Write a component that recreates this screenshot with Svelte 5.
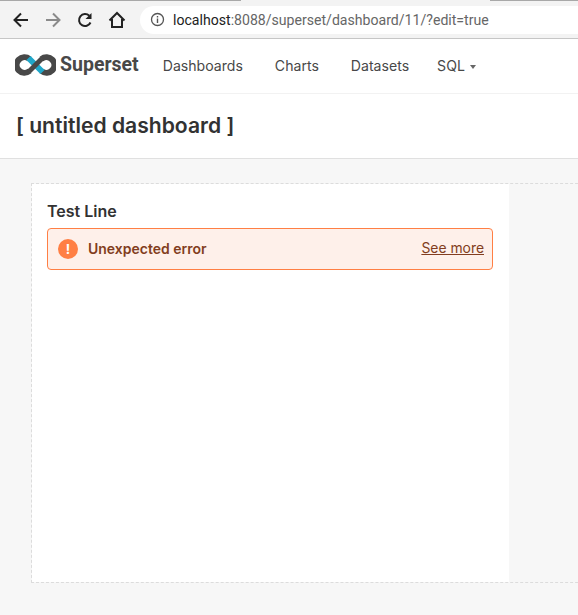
<script>
	let navItems = ['Dashboards', 'Charts', 'Datasets']
</script>

<div class="page">
	<div class="browser">
		<div class="tabline"><span class="left"></span><span class="right"></span></div>
		<div class="bar">
			<div class="tools">
				<svg width="18" height="18" viewBox="0 0 18 18"><path d="M16 9H3M9 2.500 2.500 9 9 15.500" fill="none" stroke="#222" stroke-width="2"/></svg>
				<svg width="18" height="18" viewBox="0 0 18 18"><path d="M2 9h13M9 2.500 15.500 9 9 15.500" fill="none" stroke="#8a8a8a" stroke-width="2"/></svg>
				<svg width="18" height="18" viewBox="0 0 18 18"><path d="M14.500 11.500A6 6 0 1 1 13.300 4.800" fill="none" stroke="#222" stroke-width="2"/><path d="M15.500 2v6h-6z" fill="#222"/></svg>
				<svg width="18" height="18" viewBox="0 0 18 18"><path d="M1.500 9.500 9 2l7.500 7.500M4 8v8h10V8" fill="none" stroke="#222" stroke-width="2"/></svg>
			</div>
			<div class="url">
				<svg width="15" height="15" viewBox="0 0 15 15"><circle cx="7.500" cy="7.500" r="6" fill="none" stroke="#555" stroke-width="1.300"/><path d="M7.500 6.500v4.500M7.500 4v1.500" stroke="#555" stroke-width="1.400"/></svg>
				<span class="addr"><b>localhost</b>:8088/superset/dashboard/11/?edit=true</span>
			</div>
		</div>
	</div>

	<nav>
		<div class="logo">
			<svg width="41" height="22" viewBox="0 0 41 22">
				<path d="M14.500 5A7.800 7.800 0 1 0 14.500 17M26.500 5A7.800 7.800 0 1 1 26.500 17" fill="none" stroke="#484848" stroke-width="6"/>
				<path d="M13.500 4 19.500 10M21.500 12 27.500 18" fill="none" stroke="#20a7c9" stroke-width="6"/>
				<path d="M14 17.500 27 4.500" fill="none" stroke="#484848" stroke-width="5"/>
			</svg>
			<span>Superset</span>
		</div>
		<ul>
			{#each navItems as item}
				<li>{item}</li>
			{/each}
			<li class="menu">SQL <i></i></li>
		</ul>
	</nav>

	<header>
		<h1>[ untitled dashboard ]</h1>
	</header>

	<main>
		<div class="grid">
			<section class="chart">
				<h2>Test Line</h2>
				<div class="alert">
					<span class="mark">!</span>
					<strong>Unexpected error</strong>
					<a href="#more">See more</a>
				</div>
			</section>
		</div>
	</main>
</div>

<style>
	:global(body) {
		margin: 0;
		overflow: hidden;
	}
	.page {
		width: 578px;
		height: 615px;
		overflow: hidden;
		display: flex;
		flex-direction: column;
		background: #f7f7f7;
		font-family: Inter, "Liberation Sans", sans-serif;
		color: #323232;
	}
	.browser {
		height: 38px;
		flex: none;
		display: flex;
		flex-direction: column;
		background: #f3f3f3;
		border-bottom: 1px solid #c6c6c6;
	}
	.tabline {
		height: 1px;
		flex: none;
		display: flex;
		justify-content: space-between;
	}
	.tabline span {
		background: #a8a8a8;
	}
	.left {
		width: 241px;
	}
	.right {
		width: 88px;
	}
	.bar {
		flex: 1;
		display: flex;
		align-items: center;
		gap: 14px;
		padding-left: 12px;
		min-width: 0;
	}
	.tools {
		display: flex;
		gap: 14px;
		align-items: center;
	}
	.url {
		flex: 1;
		height: 28px;
		margin-right: -20px;
		padding-left: 10px;
		display: flex;
		align-items: center;
		gap: 8px;
		background: #fff;
		border-radius: 14px;
	}
	.addr {
		font-family: Roboto, sans-serif;
		font-size: 14.1px;
		color: #666;
		white-space: nowrap;
	}
	.addr b {
		font-weight: 400;
		color: #222;
	}
	nav {
		height: 55px;
		flex: none;
		box-sizing: border-box;
		padding-bottom: 2px;
		display: flex;
		align-items: center;
		background: #fff;
		border-bottom: 1px solid #f2f2f2;
	}
	.logo {
		display: flex;
		align-items: center;
		gap: 4px;
		padding: 0 0 1px 15px;
		font-family: Roboto, sans-serif;
		font-size: 19.500px;
		font-weight: 700;
		color: #484848;
	}
	ul {
		display: flex;
		gap: 32px;
		margin: 0;
		padding: 0 0 0 24px;
		list-style: none;
		font-size: 14.1px;
		color: #484848;
	}
	.menu {
		margin-left: -4px;
	}
	.menu i {
		display: inline-block;
		margin: 0 0 2px 1px;
		border: 3px solid transparent;
		border-top: 4px solid #666;
		border-bottom: 0;
	}
	header {
		height: 65px;
		flex: none;
		box-sizing: border-box;
		padding: 0 0 2px 16px;
		display: flex;
		align-items: center;
		background: #fff;
		border-bottom: 1px solid #e0e0e0;
	}
	h1 {
		margin: 0;
		font-size: 21.100px;
		font-weight: 600;
		color: #323232;
	}
	main {
		flex: 1;
		padding: 24px 0 0 31px;
	}
	.grid {
		width: 600px;
		height: 398px;
		border: 1px dashed #dcdcdc;
	}
	.chart {
		width: 477px;
		height: 100%;
		box-sizing: border-box;
		padding: 18px 16px 0 15px;
		background: #fff;
	}
	h2 {
		margin: 0 0 8px;
		font-size: 16px;
		line-height: 18px;
		font-weight: 600;
		color: #323232;
	}
	.alert {
		height: 42px;
		display: flex;
		align-items: center;
		gap: 10px;
		padding: 0 8px 0 10px;
		box-sizing: border-box;
		background: #fef0ea;
		border: 1px solid #ff7f44;
		border-radius: 4px;
		font-size: 14px;
		color: #823d20;
	}
	.mark {
		width: 20px;
		height: 20px;
		flex: none;
		display: flex;
		align-items: center;
		justify-content: center;
		border-radius: 50%;
		background: #ff7f44;
		color: #fff;
		font-size: 13px;
		font-weight: 700;
	}
	strong {
		flex: 1;
		margin-bottom: 2px;
		font-weight: 600;
	}
	a {
		margin-bottom: 3px;
		color: #823d20;
		font-size: 13.900px;
		text-decoration: underline;
	}
</style>
